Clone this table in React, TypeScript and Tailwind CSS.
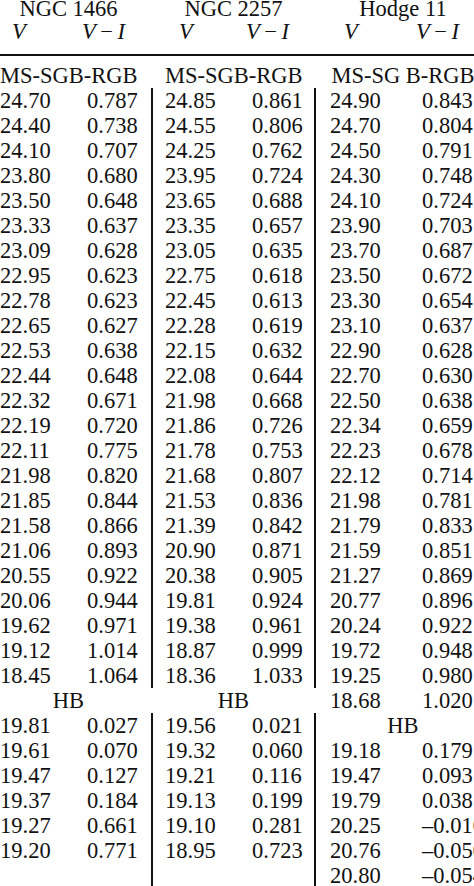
import React from 'react';

type Cell = { t: 'd'; v: string; c: string } | { t: 'h'; label: string } | { t: 'e' };

const d = (v: string, c: string): Cell => ({ t: 'd', v, c });
const h = (label: string): Cell => ({ t: 'h', label });
const e: Cell = { t: 'e' };

const ms1 = [
  ['24.70','0.787'],['24.40','0.738'],['24.10','0.707'],['23.80','0.680'],['23.50','0.648'],['23.33','0.637'],
  ['23.09','0.628'],['22.95','0.623'],['22.78','0.623'],['22.65','0.627'],['22.53','0.638'],['22.44','0.648'],
  ['22.32','0.671'],['22.19','0.720'],['22.11','0.775'],['21.98','0.820'],['21.85','0.844'],['21.58','0.866'],
  ['21.06','0.893'],['20.55','0.922'],['20.06','0.944'],['19.62','0.971'],['19.12','1.014'],['18.45','1.064'],
];
const ms2 = [
  ['24.85','0.861'],['24.55','0.806'],['24.25','0.762'],['23.95','0.724'],['23.65','0.688'],['23.35','0.657'],
  ['23.05','0.635'],['22.75','0.618'],['22.45','0.613'],['22.28','0.619'],['22.15','0.632'],['22.08','0.644'],
  ['21.98','0.668'],['21.86','0.726'],['21.78','0.753'],['21.68','0.807'],['21.53','0.836'],['21.39','0.842'],
  ['20.90','0.871'],['20.38','0.905'],['19.81','0.924'],['19.38','0.961'],['18.87','0.999'],['18.36','1.033'],
];
const ms3 = [
  ['24.90','0.843'],['24.70','0.804'],['24.50','0.791'],['24.30','0.748'],['24.10','0.724'],['23.90','0.703'],
  ['23.70','0.687'],['23.50','0.672'],['23.30','0.654'],['23.10','0.637'],['22.90','0.628'],['22.70','0.630'],
  ['22.50','0.638'],['22.34','0.659'],['22.23','0.678'],['22.12','0.714'],['21.98','0.781'],['21.79','0.833'],
  ['21.59','0.851'],['21.27','0.869'],['20.77','0.896'],['20.24','0.922'],['19.72','0.948'],['19.25','0.980'],
];

const rows: { bar: boolean; cells: Cell[] }[] = [
  { bar: false, cells: [h('MS-SGB-RGB'), h('MS-SGB-RGB'), h('MS-SG B-RGB')] },
  ...ms1.map((r, i) => ({ bar: true, cells: [d(r[0], r[1]), d(ms2[i][0], ms2[i][1]), d(ms3[i][0], ms3[i][1])] })),
  { bar: false, cells: [h('HB'), h('HB'), d('18.68', '1.020')] },
  { bar: true, cells: [d('19.81','0.027'), d('19.56','0.021'), h('HB')] },
  { bar: true, cells: [d('19.61','0.070'), d('19.32','0.060'), d('19.18','0.179')] },
  { bar: true, cells: [d('19.47','0.127'), d('19.21','0.116'), d('19.47','0.093')] },
  { bar: true, cells: [d('19.37','0.184'), d('19.13','0.199'), d('19.79','0.038')] },
  { bar: true, cells: [d('19.27','0.661'), d('19.10','0.281'), d('20.25','\u20130.010')] },
  { bar: true, cells: [d('19.20','0.771'), d('18.95','0.723'), d('20.76','\u20130.050')] },
  { bar: true, cells: [e, e, d('20.80','\u20130.054')] },
];

function Group({ cell, w, vw }: { cell: Cell; w: string; vw: string }) {
  if (cell.t === 'h') return <div className={`${w} shrink-0 text-center whitespace-nowrap`}>{cell.label}</div>;
  if (cell.t === 'e') return <div className={`${w} shrink-0`} />;
  return (
    <div className={`${w} shrink-0 flex whitespace-nowrap`}>
      <span className={`${vw} shrink-0`}>{cell.v}</span>
      <span className="shrink-0">{cell.c}</span>
    </div>
  );
}

function VI() {
  return (
    <span className="whitespace-nowrap shrink-0">
      <i>V</i>{'\u2009\u2212\u2009'}<i>I</i>
    </span>
  );
}

export default function App() {
  return (
    <div className="w-[474px] h-[886px] overflow-hidden bg-white text-[#111] text-[22.5px] font-['Liberation_Serif','Times_New_Roman',serif]">
      <div className="w-[500px] mt-[-3px]">
        {/* column titles */}
        <div className="flex h-[23px] leading-[24px]">
          <div className="w-[137px] shrink-0 text-center">NGC 1466</div>
          <div className="w-[28px] shrink-0" />
          <div className="w-[137px] shrink-0 text-center">NGC 2257</div>
          <div className="w-[28px] shrink-0" />
          <div className="w-[146px] shrink-0 text-center">Hodge 11</div>
        </div>
        <div className="flex h-[24px] leading-[24px]">
          <div className="w-[165px] shrink-0 flex">
            <span className="w-[82px] shrink-0 pl-[12px]"><i>V</i></span>
            <VI />
          </div>
          <div className="w-[165px] shrink-0 flex">
            <span className="w-[81px] shrink-0 pl-[14px]"><i>V</i></span>
            <VI />
          </div>
          <div className="w-[146px] shrink-0 flex">
            <span className="w-[86px] shrink-0 pl-[14px]"><i>V</i></span>
            <VI />
          </div>
        </div>
        <div className="mt-[10px] h-[2px] w-[474px] bg-[#111]" />

        {/* body */}
        <div className="mt-[7px]">
          {rows.map((r, i) => (
            <div key={i} className="flex h-[25px] leading-[25px]">
              <div className="w-[151px] shrink-0 flex">
                <Group cell={r.cells[0]} w="w-[137px]" vw="w-[87px]" />
              </div>
              <div className={`w-[2px] shrink-0 ${r.bar ? 'bg-[#111]' : ''}`} />
              <div className="w-[161px] shrink-0 flex pl-[12px]">
                <Group cell={r.cells[1]} w="w-[137px]" vw="w-[87px]" />
              </div>
              <div className={`w-[2px] shrink-0 ${r.bar ? 'bg-[#111]' : ''}`} />
              <div className="shrink-0 flex pl-[14px]">
                <Group cell={r.cells[2]} w="w-[146px]" vw="w-[92px]" />
              </div>
            </div>
          ))}
        </div>
      </div>
    </div>
  );
}
